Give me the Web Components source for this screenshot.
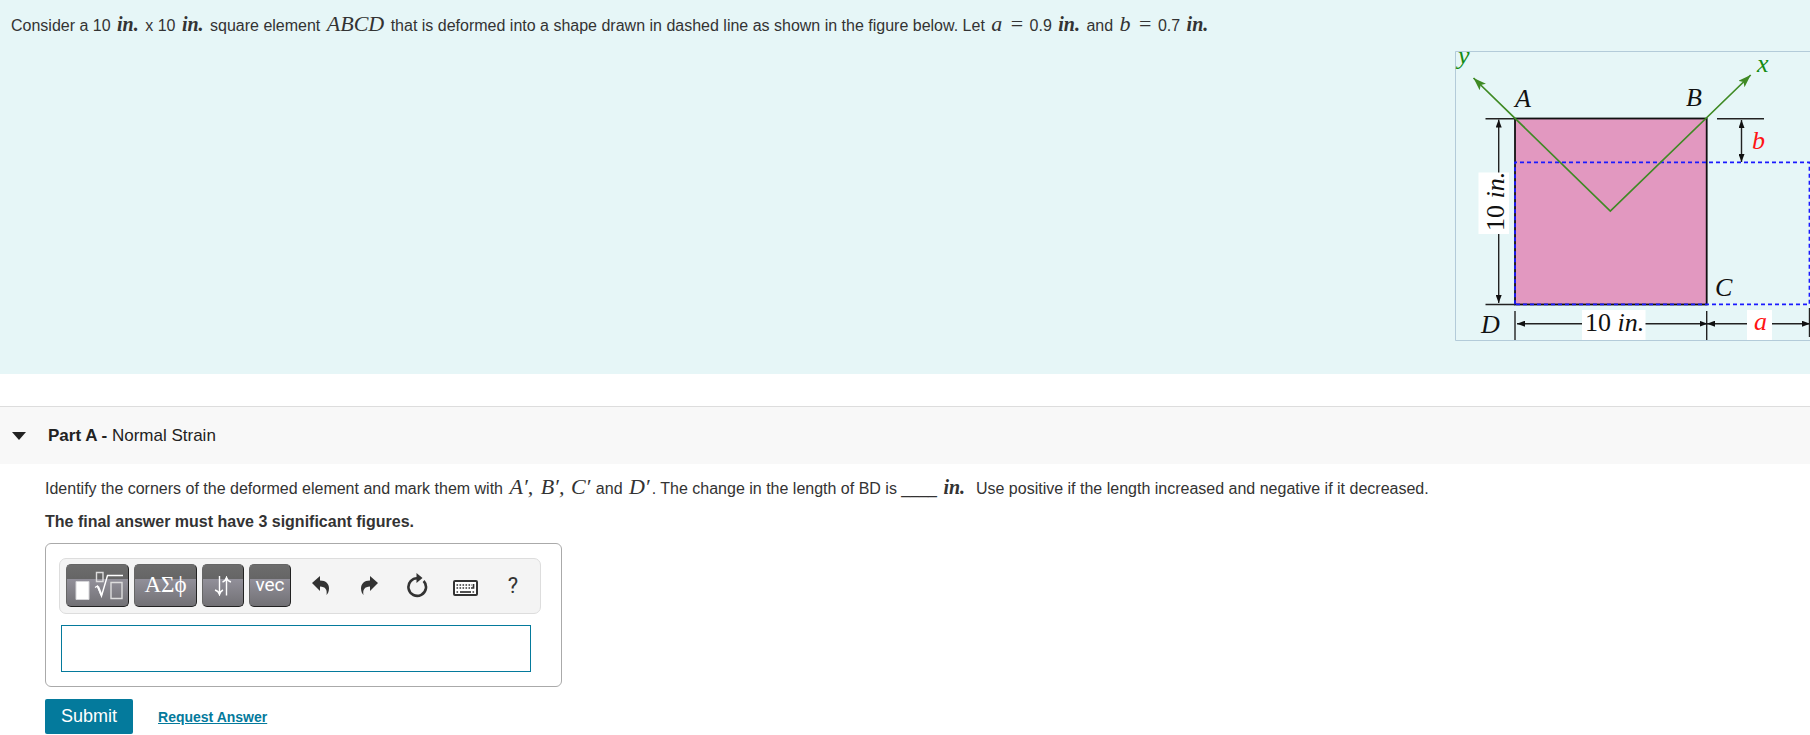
<!DOCTYPE html>
<html lang="en">
<head>
<meta charset="utf-8">
<title>Normal Strain</title>
<style>
  body {
    margin: 0;
    background: #fff;
    color: #333;
    font: 16px/24px "Liberation Sans", Arial, sans-serif;
  }
  p {
    margin: 0;
  }
</style>
</head>
<body>
<problem-intro>
  <p>Consider a 10 <math-text bold>in.</math-text> x 10 <math-text bold>in.</math-text> square element <math-text>ABCD</math-text> that is deformed into a shape drawn in dashed line as shown in the figure below. Let <math-text>a</math-text> <math-text upright>=</math-text> 0.9 <math-text bold>in.</math-text> and <math-text>b</math-text> <math-text upright>=</math-text> 0.7 <math-text bold>in.</math-text></p>
  <strain-figure slot="figure"></strain-figure>
</problem-intro>
<problem-part>
  <b slot="label">Part A -</b>
  <span slot="title">Normal Strain</span>
  <p>Identify the corners of the deformed element and mark them with <math-text>A′,</math-text> <math-text tight>B′,</math-text> <math-text tight>C′</math-text> and <math-text>D′</math-text>. The change in the length of BD is ____ <math-text bold>in.</math-text>&nbsp; Use positive if the length increased and negative if it decreased.</p>
  <p><b>The final answer must have 3 significant figures.</b></p>
  <answer-editor slot="answer"></answer-editor>
  <answer-actions slot="answer"></answer-actions>
</problem-part>

<script>
class MathText extends HTMLElement {
  constructor() {
    super();
    this.attachShadow({ mode: "open" });
    this.shadowRoot.innerHTML = `
      <style>
        :host {
          display: inline;
          font: italic 22px/1 "Liberation Serif", "Times New Roman", serif;
          line-height: 0;
          margin: 0 2px;
        }
        :host([bold]) {
          font-weight: bold;
          font-size: 20px;
        }
        :host([upright]) {
          font-style: normal;
        }
        :host([tight]) {
          margin: 0 1px;
        }
      </style>
      <slot></slot>`;
  }
}

class ProblemIntro extends HTMLElement {
  constructor() {
    super();
    this.attachShadow({ mode: "open" });
    this.shadowRoot.innerHTML = `
      <style>
        :host {
          display: block;
          background: #e6f6f7;
          padding: 14px 0 33px;
          overflow: hidden;
        }
        .text {
          padding: 0 11px;
        }
        .figure {
          display: flex;
          justify-content: flex-end;
          margin-top: 13px;
        }
      </style>
      <div class="text"><slot></slot></div>
      <div class="figure"><slot name="figure"></slot></div>
    `;
  }
}

class StrainFigure extends HTMLElement {
  constructor() {
    super();
    this.attachShadow({ mode: "open" });
    this.shadowRoot.innerHTML = `
      <style>
        :host {
          display: block;
        }
        svg {
          display: block;
          overflow: visible;
          font: italic 26px "Liberation Serif", "Times New Roman", serif;
          fill: #111;
        }
        .line { stroke: #222; stroke-width: 1.4; fill: none; }
        .dash { stroke: #1a1aff; stroke-width: 1.8; stroke-dasharray: 4 3; fill: none; }
        .axis { stroke: #3f8a24; stroke-width: 1.7; fill: none; }
        .up { font-style: normal; }
        .green { fill: #148c14; }
        .red { fill: #ff1414; }
      </style>
      <svg width="355" height="290" viewBox="0 0 355 290" role="img" aria-label="Square ABCD and its deformed shape">
        <defs>
          <marker id="tip" viewBox="0 0 8 6" refX="8" refY="3" markerWidth="8" markerHeight="6" markerUnits="userSpaceOnUse" orient="auto-start-reverse">
            <path d="M8 3 0 0V6Z" fill="#111"/>
          </marker>
          <marker id="axis-tip" viewBox="0 0 13 9" refX="13" refY="4.5" markerWidth="13" markerHeight="9" markerUnits="userSpaceOnUse" orient="auto-start-reverse">
            <path d="M13 4.5 0 0 3 4.5 0 9Z" fill="#3f8a24"/>
          </marker>
        </defs>
        <path d="M355 .5H.5V289.500H355" fill="none" stroke="#b3cbd9"/>
        <rect x="60" y="67.500" width="191.700" height="186" fill="#e298c0" stroke="#111" stroke-width="1.800"/>
        <path class="line" d="M30.500 67.700H60M30.500 253.500H60M262 67.700H309M60 260V289M251.700 260V289M354.500 257V286"/>
        <path class="dash" d="M60 253.300V111.300H354.500V253.300H60"/>
        <path class="axis" d="M18.500 27 155.300 160 295.700 24" marker-start="url(#axis-tip)" marker-end="url(#axis-tip)"/>
        <path class="line" d="M43.700 68.500V252" marker-start="url(#tip)" marker-end="url(#tip)"/>
        <path class="line" d="M286.500 69V111" marker-start="url(#tip)" marker-end="url(#tip)"/>
        <path class="line" d="M62 272.700H252.500" marker-start="url(#tip)" marker-end="url(#tip)"/>
        <path class="line" d="M252 272.700H355" marker-start="url(#tip)" marker-end="url(#tip)"/>
        <path d="M23.500 121.500H54V183H23.500ZM127 259H190.500V289H127ZM292 259H317V289H292Z" fill="#fff"/>
        <text class="green" x="3" y="13">y</text>
        <text class="green" x="302" y="21">x</text>
        <text x="60" y="56">A</text>
        <text x="231" y="55">B</text>
        <text x="260" y="245">C</text>
        <text x="26" y="282">D</text>
        <text class="red" x="297" y="98">b</text>
        <text class="red" x="299" y="279">a</text>
        <text x="130" y="280"><tspan class="up">10</tspan> in.</text>
        <text transform="translate(49 180) rotate(-90)"><tspan class="up">10</tspan> in.</text>
      </svg>
    `;
  }
}

class ProblemPart extends HTMLElement {
  constructor() {
    super();
    this.attachShadow({ mode: "open" });
    this.shadowRoot.innerHTML = `
      <style>
        :host {
          display: block;
          margin-top: 32px;
        }
        header {
          border-top: 1px solid #ddd;
          background: #f8f8f8;
          color: #222;
        }
        h2 {
          margin: 0;
          font: inherit;
          font-size: 17px;
        }
        button {
          display: flex;
          align-items: center;
          gap: 22px;
          width: 100%;
          height: 57px;
          padding: 0 12px;
          border: 0;
          background: none;
          color: inherit;
          font: inherit;
          text-align: left;
        }
        .body {
          display: flex;
          flex-direction: column;
          gap: 9px;
          padding: 13px 45px 0;
        }
        .answer {
          display: flex;
          flex-direction: column;
          gap: 12px;
        }
      </style>
      <header>
        <h2>
          <button type="button" aria-expanded="true">
            <svg width="14" height="8" viewBox="0 0 14 8" aria-hidden="true"><path d="M0 0H14L7 8Z" fill="#222"/></svg>
            <span><slot name="label"></slot> <slot name="title"></slot></span>
          </button>
        </h2>
      </header>
      <div class="body">
        <slot></slot>
        <div class="answer"><slot name="answer"></slot></div>
      </div>
    `;
    const toggle = this.shadowRoot.querySelector("button");
    toggle.addEventListener("click", this._toggle.bind(this));
  }
  _toggle(event) {
    const body = this.shadowRoot.querySelector(".body");
    const open = body.style.display !== "none";
    body.style.display = open ? "none" : "";
    event.currentTarget.setAttribute("aria-expanded", String(!open));
  }
}

class AnswerEditor extends HTMLElement {
  constructor() {
    super();
    this.attachShadow({ mode: "open" });
    this.shadowRoot.innerHTML = `
      <style>
        :host {
          display: block;
          box-sizing: border-box;
          width: 517px;
          max-width: 100%;
          padding: 14px 20px 14px 13px;
          border: 1px solid #aaa;
          border-radius: 6px;
        }
        .toolbar {
          display: flex;
          align-items: center;
          gap: 5px;
          padding: 5px 0 6px 6px;
          border: 1px solid #ddd;
          border-radius: 7px;
          background: #f4f4f4;
        }
        button {
          display: flex;
          flex: none;
          align-items: center;
          justify-content: center;
          box-sizing: border-box;
          height: 43px;
          padding: 0;
          border: 0;
          background: none;
          color: #333;
          font: 22px Roboto, "Liberation Sans", sans-serif;
        }
        .key {
          border: 1px solid #666;
          border-right: 1px solid #222;
          border-bottom: 1px solid #222;
          border-radius: 5px;
          background: linear-gradient(#6d6d6d 0, #656565 33%, #92909a 33%, #727175 100%);
          color: #fff;
          width: 42px;
        }
        .wide { width: 63px; }
        .greek { padding-bottom: 2px; font: 23px/1 "Liberation Serif", serif; }
        .vec { padding-bottom: 2px; font-size: 19px; }
        .tools { display: flex; margin-left: 1px; }
        .tools button { width: 48px; }
        input {
          display: block;
          box-sizing: border-box;
          width: calc(100% - 12px);
          height: 47px;
          margin: 11px 0 0 2px;
          padding: 0 8px;
          border: 1px solid #047a9c;
          border-radius: 0;
          font: inherit;
        }
      </style>
      <div class="toolbar" role="toolbar" aria-label="Equation tools">
        <button type="button" class="key wide" aria-label="Templates">
          <svg width="50" height="30" viewBox="0 0 50 30" fill="none" stroke="#fff">
            <path d="M3 10.500H16V28.500H3Z" fill="#fff" stroke="#d5d5d8"/>
            <path d="M23.500 1.500H30V10.500H23.500Z" stroke="#ddd" stroke-width="1.400"/>
            <path d="M22 16.500 24.500 15 28.500 25 34.500 4.500H50" stroke-width="1.400"/>
            <path d="M25 15.500 28.500 24" stroke-width="2"/>
            <path d="M38 11.500H49V27.500H38Z" stroke="#ddd" stroke-width="1.400"/>
          </svg>
        </button>
        <button type="button" class="key wide greek">ΑΣϕ</button>
        <button type="button" class="key" aria-label="Arrows">
          <svg width="18" height="20" viewBox="0 0 18 20" fill="none" stroke="#fff" stroke-width="1.400">
            <path d="M5.500 0V18M1 14Q4.500 15 5.500 18.500 6.500 15 9 14M12.500 19.500V2M8.500 6Q11.500 5 12.500 1.500 13.500 5 17 6"/>
          </svg>
        </button>
        <button type="button" class="key vec">vec</button>
        <div class="tools">
          <button type="button" aria-label="Undo">
            <svg width="18" height="20" viewBox="0 0 18 20" fill="#333"><path d="M0 7 8 0V4.500C14 4.500 17 8 17 12.500 17 16 15.500 18 14.500 19 15.500 14 13.500 10.500 8 10.500V15Z"/></svg>
          </button>
          <button type="button" aria-label="Redo">
            <svg width="18" height="20" viewBox="0 0 18 20" fill="#333"><path d="M18 7 10 0V4.500C4 4.500 1 8 1 12.500 1 16 2.500 18 3.500 19 2.500 14 4.500 10.500 10 10.500V15Z"/></svg>
          </button>
          <button type="button" aria-label="Reset">
            <svg width="22" height="26" viewBox="0 0 22 26"><path d="M12 5.300A8.800 8.800 0 1 0 17.600 8" fill="none" stroke="#333" stroke-width="2.600"/><path d="M10.500 0 16.500 5 10.500 10Z" fill="#333"/></svg>
          </button>
          <button type="button" aria-label="Keyboard">
            <svg width="25" height="21" viewBox="0 0 25 21" fill="none" stroke="#333">
              <rect x="1" y="6" width="23" height="14" rx="1" fill="#fff" stroke-width="2"/>
              <path d="M3.500 10H19M3.500 13H17M3.500 17H6M19.500 17H22" stroke-width="1.500" stroke-dasharray="1.600 1.400"/>
              <path d="M7 17H18" stroke-width="1.700"/><path d="M20.500 9V13H18" stroke-width="1.700"/>
            </svg>
          </button>
          <button type="button" aria-label="Help">?</button>
        </div>
      </div>
      <input type="text" aria-label="Answer">
    `;
  }
}

class AnswerActions extends HTMLElement {
  constructor() {
    super();
    this.attachShadow({ mode: "open" });
    this.shadowRoot.innerHTML = `
      <style>
        :host {
          display: flex;
          align-items: center;
          gap: 25px;
        }
        button {
          height: 35px;
          padding: 0 16px;
          border: 0;
          border-radius: 2px;
          background: #047a9c;
          color: #fff;
          font: 18px "Liberation Sans", Arial, sans-serif;
        }
        a {
          color: #047a9c;
          font-size: 14px;
          font-weight: bold;
        }
      </style>
      <button type="submit">Submit</button>
      <a href="#">Request Answer</a>
    `;
  }
}

customElements.define("math-text", MathText);
customElements.define("problem-intro", ProblemIntro);
customElements.define("strain-figure", StrainFigure);
customElements.define("problem-part", ProblemPart);
customElements.define("answer-editor", AnswerEditor);
customElements.define("answer-actions", AnswerActions);
</script>
</body>
</html>
